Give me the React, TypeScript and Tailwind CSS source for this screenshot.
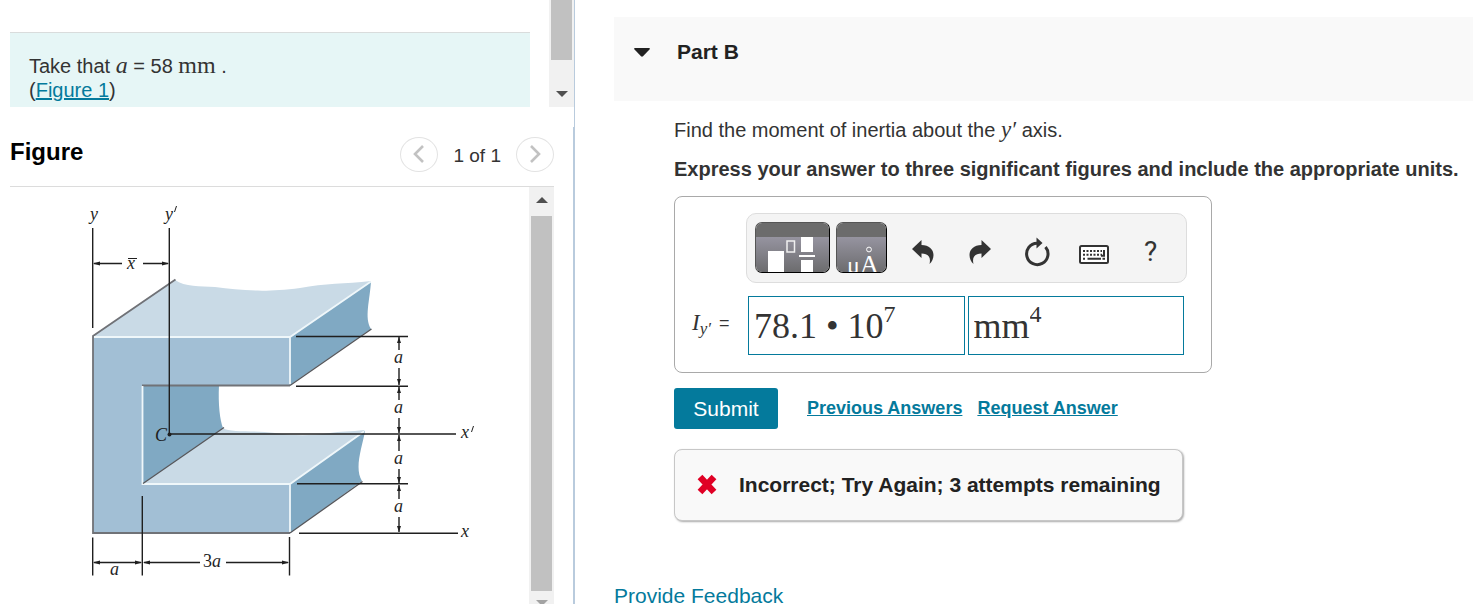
import { useState } from "react";
import type { ReactNode } from "react";

const dimensionRows = [
  { top: 337, bottom: 385, label: 363 },
  { top: 387, bottom: 433, label: 413 },
  { top: 435, bottom: 483, label: 464 },
  { top: 485, bottom: 532, label: 512 },
];

function Triangle({ up = false, muted = false }: { up?: boolean; muted?: boolean }) {
  return (
    <svg viewBox="0 0 12 6" className="h-[6px] w-[12px]" fill={muted ? "#a3a3a3" : "#505050"} aria-hidden>
      <path d={up ? "M0 6 6 0l6 6z" : "M0 0h12L6 6z"} />
    </svg>
  );
}

function Channel() {
  return (
    <svg viewBox="10 187 519 417" className="h-[417px] w-[519px] shrink-0" role="img" aria-label="Channel cross section">
      {/* Faces */}
      <path fill="#c9dae6" d="M93 336 175 280C185 287 200 286 215 287 240 290 262 293 300 288 325 283 345 284 371 281L290 337z" />
      <path fill="#80a9c3" d="M290 337 371 281C370 300 364 318 371 329L290 385z" />
      <path fill="#80a9c3" d="M142 385H219C218 405 220 420 223 428L142 484z" />
      <path fill="#c9dae6" d="M142 484 223 428C230 433 255 430 275 433 295 436 310 436 330 433 340 431 350 432 365 430L290 484z" />
      <path fill="#80a9c3" d="M290 484 365 431C362 448 354 468 362 481L290 533z" />
      <path fill="#a2bfd5" d="M93 336H290V385H142V484H290V533H93z" />

      {/* Edges */}
      <g fill="none" stroke="#707277" strokeWidth="1.8">
        <path d="M175.500 279.500 93 336V533H290" />
        <path d="M142 385.500H290" />
      </g>
      <g fill="none" stroke="#eff7fa" strokeWidth="1.8">
        <path d="M94 337H290L371 281.500M290 337V384" />
        <path d="M142.500 386V484H290L364 431.500M290 484V532" />
      </g>
      <g fill="none" stroke="#55565a" strokeWidth="1.3">
        <path d="M290 385.500 371.500 329M290 533 362.500 481.500M143 483.500 224 427.500" />
      </g>

      {/* Axes and extension lines */}
      <g fill="none" stroke="#1f1f1f" strokeWidth="1.4">
        <path d="M92.700 228V328M169.300 228V434H456M299 533.300H458" />
        <path d="M296 336.500H408M296 386.300H408M297 483.700H408" />
        <path d="M92.700 537.500V575.500M142.300 496V575.500M289.500 537V575.500" />
        <path d="M94 263.500H122M143 263.500H168M94 562.500H141M144 562.500H200M226 562.500H288" />
        {dimensionRows.map((r) => (
          <path key={r.top} d={`M399 ${r.top}V${r.label - 13}M399 ${r.label + 5}V${r.bottom}`} />
        ))}
      </g>
      <circle cx="169.5" cy="434.500" r="2" fill="#1f1f1f" />

      {/* Arrow heads */}
      <g fill="#1f1f1f">
        <path d="M93 263.500l7-2v4zM169 263.500l-7-2v4z" />
        <path d="M93 562.500l7-2v4zM142 562.500l-7-2v4zM143 562.500l7-2v4zM289 562.500l-7-2v4z" />
        {dimensionRows.map((r) => (
          <path key={r.top} d={`M399 ${r.top}l-2 6h4zM399 ${r.bottom}l-2-6h4z`} />
        ))}
      </g>

      {/* Labels */}
      <g className="font-['Liberation_Serif',serif] text-[18px] italic" fill="#1f1f1f">
        <text x="90" y="220">y</text>
        <text x="165" y="220">y</text>
        <text x="127" y="269">x</text>
        <path d="M128 258.500H137M176.500 206l-2 6M473.500 426l-2 6" stroke="#1f1f1f" strokeWidth="1" />
        <text x="155" y="441">C</text>
        <text x="461" y="438">x</text>
        <text x="461" y="537">x</text>
        <text x="110" y="575">a</text>
        <text x="203" y="567"><tspan className="not-italic">3</tspan>a</text>
        {dimensionRows.map((r) => (
          <text key={r.top} x="394" y={r.label}>a</text>
        ))}
      </g>
    </svg>
  );
}

function PagerButton({ label, d }: { label: string; d: string }) {
  return (
    <button type="button" aria-label={label} className="flex h-[35px] w-[38px] items-center justify-center rounded-[50%] border border-[#e3e3e3] bg-white">
      <svg viewBox="0 0 12 18" className="h-[18px] w-[12px]" fill="none" stroke="#c2c2c2" strokeWidth="2.6" aria-hidden>
        <path d={d} />
      </svg>
    </button>
  );
}

function ToolButton({ label, children }: { label: string; children: ReactNode }) {
  return (
    <button type="button" aria-label={label} className="flex h-[51px] w-[57px] items-center justify-center pt-[8px] text-[#333]">
      {children}
    </button>
  );
}

function Toolbar() {
  return (
    <div className="flex h-[70px] items-start rounded-[10px] border border-[#ddd] bg-[#f4f4f4] pt-[8px] pl-[8px]">
      <button type="button" aria-label="Templates" className="mr-[6px] h-[51px] w-[75px] overflow-hidden rounded-[7px] border border-t-[#555] border-r-black border-b-black border-l-[#555]">
        <svg viewBox="0 0 73 49" className="h-[49px] w-[73px]" aria-hidden>
          <defs>
            <linearGradient id="key" x1="0" y1="0" x2="0" y2="1">
              <stop offset="0" stopColor="#9694a0" />
              <stop offset="1" stopColor="#6c6c6e" />
            </linearGradient>
          </defs>
          <path fill="#6c6c6c" d="M0 0h73v15H0z" />
          <path fill="url(#key)" d="M0 14h73v35H0z" />
          <path fill="#fff" d="M12 28h16v21H12zM45 14h12v15H45zM45 37h12v12H45zM43 32h16v2H43z" />
          <path fill="none" stroke="#f0f0f0" strokeWidth="1.5" d="M31 18h7.500v11H31z" />
        </svg>
      </button>
      <button type="button" aria-label="Units" className="mr-[7px] h-[51px] w-[51px] overflow-hidden rounded-[7px] border border-t-[#555] border-r-black border-b-black border-l-[#555]">
        <svg viewBox="0 0 49 49" className="h-[49px] w-[49px]" aria-hidden>
          <path fill="#6c6c6c" d="M0 0h49v15H0z" />
          <path fill="url(#key)" d="M0 14h49v35H0z" />
          <text x="10" y="50" fill="#fff" className="font-['Liberation_Serif',serif] text-[24px]">μ</text>
          <text x="23" y="50" fill="#fff" className="font-['Liberation_Serif',serif] text-[26px]">A</text>
          <circle cx="32" cy="26.500" r="2.400" fill="none" stroke="#fff" />
        </svg>
      </button>
      <ToolButton label="Undo">
        <svg viewBox="0 0 22 26" className="h-[26px] w-[22px]" fill="currentColor" aria-hidden>
          <path d="M0 10 9.500 1V6C17 6 21.500 10.500 21.500 16 21.500 19.500 20 23 17.500 25 19 19 17 14.500 9.500 14.500V19z" />
        </svg>
      </ToolButton>
      <ToolButton label="Redo">
        <svg viewBox="0 0 22 26" className="h-[26px] w-[22px]" fill="currentColor" aria-hidden>
          <path d="M22 10 12.500 1V6C5 6 .5 10.500.5 16 .5 19.500 2 23 4.500 25 3 19 5 14.500 12.500 14.500V19z" />
        </svg>
      </ToolButton>
      <ToolButton label="Reset">
        <svg viewBox="0 0 26 30" className="h-[30px] w-[26px]" aria-hidden>
          <path fill="none" stroke="currentColor" strokeWidth="3" d="M21.500 10A10.700 10.700 0 1 1 13 6.200" />
          <path fill="currentColor" d="M12.500.5 18.500 6l-6 5.500z" />
        </svg>
      </ToolButton>
      <ToolButton label="Keyboard">
        <svg viewBox="0 1 30 26" className="h-[26px] w-[30px]" aria-hidden>
          <rect x="1" y="8" width="28" height="17" rx="1.500" fill="#fff" stroke="currentColor" strokeWidth="2" />
          <path fill="none" stroke="currentColor" strokeWidth="2" strokeDasharray="2 1.500" d="M4 13h19M4 16.700h19M4 20.700h3" />
          <path fill="none" stroke="currentColor" strokeWidth="2" d="M8.500 20.700H22M23.500 20.700h2.500M25 12v5.700h-3" />
        </svg>
      </ToolButton>
      <ToolButton label="Help">
        <span className="font-[Roboto,sans-serif] text-[28px] leading-none">?</span>
      </ToolButton>
    </div>
  );
}

function AnswerField({ label, base, power }: { label: string; base: string; power: string }) {
  const [value, setValue] = useState(base);
  const [exponent, setExponent] = useState(power);
  return (
    <div className="flex h-[59px] flex-1 items-start border border-[#047a9c] bg-white pl-[5px] font-['Liberation_Serif',serif] text-[#333]">
      <input
        aria-label={label}
        value={value}
        onChange={(e) => setValue(e.target.value)}
        className="field-sizing-content h-[57px] text-[36px] outline-none"
      />
      <input
        aria-label={`${label} exponent`}
        value={exponent}
        onChange={(e) => setExponent(e.target.value)}
        className="field-sizing-content h-[34px] text-[24px] outline-none"
      />
    </div>
  );
}

function ProblemPane() {
  return (
    <div className="flex min-w-0 flex-col">
      <section className="flex h-[127px] shrink-0 items-start border-r border-[#b9cbdd] pl-[10px]">
        <div className="mt-[32px] mr-[19px] h-[75px] flex-1 border-t border-[#d9dcdc] bg-[#e6f6f6] pt-[20px] pl-[19px] text-[20px] leading-[24px] text-[#333]">
          <p>
            Take that <i className="font-['Liberation_Serif',serif] text-[24px] leading-none">a</i> = 58{" "}
            <span className="font-['Liberation_Serif',serif] text-[24px] leading-none">mm</span> .
          </p>
          <p>
            (<a href="#figure" className="text-[#047a9c] underline">Figure 1</a>)
          </p>
        </div>
        <div className="flex h-[107px] w-[25px] flex-col items-center justify-between bg-[#f1f1f1] pb-[10px]">
          <div className="h-[60px] w-[21px] bg-[#c1c1c1]" />
          <Triangle />
        </div>
      </section>

      <section id="figure" className="flex min-h-0 flex-1 flex-col border-r-2 border-[#b9cbdd] pr-[19px] pl-[10px]">
        <header className="flex h-[60px] shrink-0 items-center justify-between border-b border-[#dcdcdc] pb-[5px]">
          <h2 className="pb-[5px] text-[24px] font-bold text-black">Figure</h2>
          <div className="flex items-center gap-[15px] text-[19px] text-[#333]">
            <PagerButton label="Previous figure" d="M10 1 2 9l8 8" />
            <span className="pt-[4px]">1 of 1</span>
            <PagerButton label="Next figure" d="M2 1l8 8-8 8" />
          </div>
        </header>
        <div className="flex min-h-0 flex-1 justify-between overflow-hidden">
          <Channel />
          <div className="flex w-[25px] shrink-0 flex-col items-center bg-[#f1f1f1] pt-[10px]">
            <Triangle up />
            <div className="mt-[13px] mb-[9px] w-[21px] flex-1 bg-[#c1c1c1]" />
            <div className="h-[4px] overflow-hidden">
              <Triangle muted />
            </div>
          </div>
        </div>
      </section>
    </div>
  );
}

function PartPane() {
  return (
    <main className="min-w-0 overflow-hidden pt-[17px] pl-[39px] text-[20px] text-[#333]">
      <header className="flex h-[84px] bg-[#f9f9f9] pt-[20px] pl-[20px]">
        <button type="button" className="flex h-[30px] items-center gap-[27px] text-[21px] font-bold text-[#222]">
          <svg viewBox="0 0 16 9" className="h-[9px] w-[16px]" fill="#222" aria-hidden>
            <path d="M1 0h14q1.500.2.500 1.500L9 8.300q-1 .9-2 0L.5 1.500Q-.5.200 1 0z" />
          </svg>
          Part B
        </button>
      </header>

      <div className="pl-[60px]">
        <p className="mt-[14px] h-[30px] leading-[30px]">
          Find the moment of inertia about the{" "}
          <i className="font-['Liberation_Serif',serif] text-[23px] leading-none">y′</i> axis.
        </p>
        <p className="mt-[9px] leading-[30px] font-bold">
          Express your answer to three significant figures and include the appropriate units.
        </p>

        <div className="mt-[12px] flex h-[177px] w-[538px] items-start rounded-[8px] border border-[#a9a9a9] pt-[16px] pr-[24px] pl-[17px]">
          <div className="mt-[92px] flex w-[54px] shrink-0 gap-[8px] text-[18px] leading-[36px]">
            <i className="font-['Liberation_Serif',serif] text-[23px]">
              I<sub className="text-[17px]">y′</sub>
            </i>
            <span>=</span>
          </div>
          <div className="flex-1">
            <Toolbar />
            <div className="mt-[13px] mr-[3px] ml-[2px] flex gap-[3px]">
              <AnswerField label="Value" base="78.1 • 10" power="7" />
              <AnswerField label="Units" base="mm" power="4" />
            </div>
          </div>
        </div>

        <div className="mt-[15px] flex items-center text-[18px] font-bold text-[#047a9c]">
          <button type="button" className="h-[41px] w-[104px] rounded-[3px] bg-[#047a9c] text-[21px] font-normal text-white">
            Submit
          </button>
          <a href="#previous" className="ml-[29px] underline">Previous Answers</a>
          <a href="#request" className="ml-[15px] underline">Request Answer</a>
        </div>

        <div role="status" className="mt-[20px] flex h-[72px] w-[509px] items-center gap-[21px] rounded-[8px] border border-[#c7c7c7] bg-[#f9f9f9] pl-[21px] text-[21px] font-bold text-[#222] shadow-[1px_1px_2px_#aaa]">
          <svg viewBox="0 0 22 22" className="h-[22px] w-[22px] shrink-0" aria-hidden>
            <path d="M4 3l14 15M18 3 4 18" stroke="#e00025" strokeWidth="6.500" />
          </svg>
          Incorrect; Try Again; 3 attempts remaining
        </div>
      </div>

      <a href="#feedback" className="mt-[60px] block text-[21px] leading-[30px] text-[#047a9c]">Provide Feedback</a>
    </main>
  );
}

export default function App() {
  return (
    <div className="grid h-screen grid-cols-[575fr_898fr] overflow-hidden bg-white font-['Liberation_Sans',Arial,sans-serif]">
      <ProblemPane />
      <PartPane />
    </div>
  );
}
